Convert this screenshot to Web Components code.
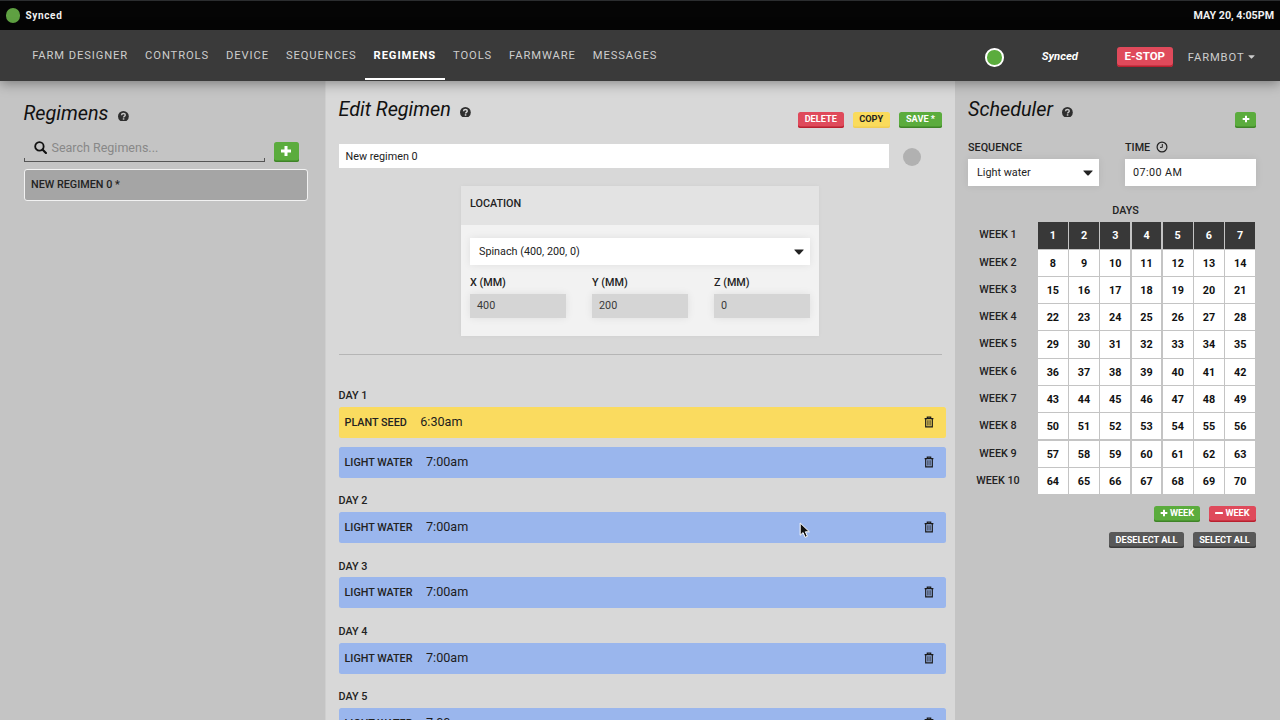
<!DOCTYPE html>
<html lang="en">
<head>
<meta charset="utf-8">
<title>FarmBot - Regimens</title>
<style>
    html, body {
        margin: 0;
        height: 100%;
        overflow: hidden;
        background: #d8d8d8;
        font-family: Roboto, "Liberation Sans", sans-serif;
        color: #222;
    }
</style>
</head>
<body>
<farm-app></farm-app>

<script>
const ICONS = {
    help: ['0 0 16 16', '<circle cx="8" cy="8" r="8" fill="#2e2e2e"/><path d="M5.2 6.300C5.300 4.500 6.500 3.700 8 3.700c1.600 0 2.800.9 2.800 2.300 0 2-2.500 1.900-2.500 3.500" fill="none" stroke="var(--hole, #c4c4c4)" stroke-width="2.100"/><rect x="7.100" y="10.700" width="2.300" height="2.200" fill="var(--hole, #c4c4c4)"/>'],
    search: ['0 0 12 12', '<circle cx="5" cy="5" r="3.900" fill="none" stroke="#111" stroke-width="1.700"/><path d="M7.800 7.800l3.200 3.200" stroke="#111" stroke-width="2" stroke-linecap="round"/>'],
    plus: ['0 0 12 12', '<path d="M4.500 1h3v3.500H11v3H7.500V11h-3V7.500H1v-3h3.500z" fill="currentColor"/>'],
    minus: ['0 0 12 12', '<rect x="0" y="4.500" width="12" height="3" rx=".6" fill="currentColor"/>'],
    clock: ['0 0 12 12', '<circle cx="6" cy="6" r="4.900" fill="none" stroke="#222" stroke-width="1.200"/><path d="M6.300 3v3.400H4" fill="none" stroke="#222" stroke-width="1"/>'],
    trash: ['0 0 10 12', '<path d="M3.300 2.300V1.200h3.400v1.100M.6 2.700h8.800M1.700 2.700v8.200h6.600V2.700" fill="none" stroke="#1a1a1a" stroke-width="1.200"/><path d="M3.700 4.200v5.400M5 4.200v5.400M6.300 4.200v5.400" stroke="#1a1a1a" stroke-width=".65"/>'],
    caret: ['0 0 10 6', '<path d="M.6.500h8.800q.5 0 .2.500L5.500 5.400q-.5.400-1 0L.4 1Q.1.500.6.500z" fill="currentColor"/>'],
    pointer: ['0 0 12 17', '<path d="M1.200 1v12.200l2.900-2.600 2 4.700 2.300-1-2-4.500h4z" fill="#111" stroke="#fff" stroke-width="1"/>']
};

class FbIcon extends HTMLElement {
    constructor() {
        super();
        this.attachShadow({ mode: 'open' });
    }

    connectedCallback() {
        const [box, shape] = ICONS[this.getAttribute('name')];
        this.shadowRoot.innerHTML = `
            <style>
                :host { display: inline-block; flex: none; width: 12px; height: 12px; }
                svg { display: block; width: 100%; height: 100%; }
            </style>
            <svg viewBox="${box}">${shape}</svg>
        `;
    }
}
customElements.define('fb-icon', FbIcon);

class FbButton extends HTMLElement {
    constructor() {
        super();
        this.attachShadow({ mode: 'open' });
        this.shadowRoot.innerHTML = `
            <style>
                :host {
                    --bg: #5bac3d;
                    --edge: #3f8328;
                    display: flex;
                    align-items: center;
                    justify-content: center;
                    box-sizing: border-box;
                    flex: none;
                    height: 16px;
                    padding-bottom: 2px;
                    border-radius: 2.500px;
                    background: var(--bg);
                    box-shadow: inset 0 -1.500px 0 var(--edge);
                    color: #fff;
                    font-size: 9.200px;
                    font-weight: 700;
                    white-space: nowrap;
                }
                :host([color=red]) { --bg: #df4a5b; --edge: #b8202f; }
                :host([color=yellow]) { --bg: #fadb5c; --edge: #f0cd55; color: #222; }
                :host([color=gray]) { --bg: #595959; --edge: #3c3c3c; }
                ::slotted(fb-icon) { width: 8px; height: 8px; margin-right: 2px; }
                :host([square]) ::slotted(fb-icon) { width: var(--glyph, 8px); height: var(--glyph, 8px); margin: 0; }
            </style>
            <slot></slot>
        `;
    }
}
customElements.define('fb-button', FbButton);

class FbTitle extends HTMLElement {
    constructor() {
        super();
        this.attachShadow({ mode: 'open' });
        this.shadowRoot.innerHTML = `
            <style>
                :host { display: flex; align-items: center; height: 24px; }
                h3 { margin: 0; font-size: 19.800px; font-weight: 400; font-style: italic; line-height: 25px; color: #111; white-space: nowrap; }
                fb-icon { width: 10.800px; height: 10.800px; margin: 5px 0 0 9.500px; }
            </style>
            <h3><slot></slot></h3><fb-icon name="help"></fb-icon>
        `;
    }
}
customElements.define('fb-title', FbTitle);

class FbField extends HTMLElement {
    constructor() {
        super();
        this.attachShadow({ mode: 'open' });
        this.shadowRoot.innerHTML = `
            <style>
                :host {
                    display: flex;
                    align-items: center;
                    justify-content: space-between;
                    box-sizing: border-box;
                    height: 27px;
                    padding: 0 6px 0 9px;
                    background: #fff;
                    box-shadow: 0 0 8px rgba(0, 0, 0, 0.08);
                    font-size: 10.800px;
                    white-space: nowrap;
                }
                :host([disabled]) { height: 24px; padding-left: 7px; background: #d5d5d5; color: #3a3a3a; }
                fb-icon { display: none; width: 10px; height: 6px; margin-top: 1px; }
                :host([select]) fb-icon { display: block; }
            </style>
            <span><slot></slot></span><fb-icon name="caret"></fb-icon>
        `;
    }
}
customElements.define('fb-field', FbField);

class TickerBar extends HTMLElement {
    constructor() {
        super();
        this.attachShadow({ mode: 'open' });
        this.shadowRoot.innerHTML = `
            <style>
                :host {
                    display: flex;
                    align-items: center;
                    box-sizing: border-box;
                    height: 30px;
                    padding: 0 6px 0 5.500px;
                    border-top: 1px solid #2b2d2f;
                    background: #050505;
                    color: #f0f0f0;
                    font-size: 10px;
                    font-weight: 700;
                }
                i { width: 14.500px; height: 14.500px; margin-right: 5.500px; border-radius: 50%; background: #5fa142; }
                .status { letter-spacing: 0.650px; margin-top: -1px; }
                .time { margin: -1px 0 0 auto; font-size: 10.700px; }
            </style>
            <i></i><span class="status">Synced</span><span class="time">MAY 20, 4:05PM</span>
        `;
    }
}
customElements.define('ticker-bar', TickerBar);

class NavBar extends HTMLElement {
    constructor() {
        super();
        this.attachShadow({ mode: 'open' });
    }

    connectedCallback() {
        const links = ['Farm Designer', 'Controls', 'Device', 'Sequences', 'Regimens', 'Tools', 'Farmware', 'Messages'];
        this.shadowRoot.innerHTML = `
            <style>
                :host {
                    position: relative;
                    z-index: 1;
                    display: flex;
                    align-items: center;
                    box-sizing: border-box;
                    height: 50.500px;
                    padding: 0 25px 0 24px;
                    background: #3a3a3a;
                    box-shadow: 0 2px 12px rgba(0, 0, 0, 0.4);
                    color: #cdcdcd;
                    font-size: 11.200px;
                    letter-spacing: 0.900px;
                    text-transform: uppercase;
                }
                nav { display: flex; align-self: stretch; }
                a { box-sizing: border-box; padding: 0 8.800px 0 8.200px; line-height: 52px; height: 50px; border-bottom: 2.500px solid transparent; white-space: nowrap; }
                a.active { border-color: #fff; color: #fff; font-weight: 700; }
                .dot { box-sizing: border-box; width: 18.500px; height: 18.500px; margin: 4px 0 0 auto; border: 2px solid #fff; border-radius: 50%; background: #5bac3d; }
                .sync { width: 39px; margin: 2px 36px 0 38px; font-size: 11.300px; font-weight: 700; font-style: italic; letter-spacing: 0; text-transform: none; color: #fff; }
                fb-button { width: 56px; height: 20px; margin: 3px 15px 0 0; font-size: 11.500px; letter-spacing: 0; border-radius: 3px; }
                .user { display: flex; align-items: center; margin-top: 4px; }
                .user fb-icon { width: 7px; height: 4px; margin-left: 3.500px; }
            </style>
            <nav>${links.map(l => `<a class="${l === 'Regimens' ? 'active' : ''}">${l}</a>`).join('')}</nav>
            <span class="dot"></span>
            <span class="sync">Synced</span>
            <fb-button color="red">E-STOP</fb-button>
            <span class="user">FarmBot<fb-icon name="caret"></fb-icon></span>
        `;
    }
}
customElements.define('nav-bar', NavBar);

class RegimenList extends HTMLElement {
    constructor() {
        super();
        this.attachShadow({ mode: 'open' });
        this.shadowRoot.innerHTML = `
            <style>
                :host { display: block; box-sizing: border-box; width: 325px; padding: 21px 17px 0 23.500px; background: #c4c4c4; }
                .row { display: flex; align-items: flex-end; justify-content: space-between; height: 36.500px; padding-right: 9.500px; }
                .search {
                    display: flex;
                    align-items: center;
                    box-sizing: border-box;
                    width: 241px;
                    height: 27px;
                    padding: 0 0 1px 9px;
                    font-size: 12.500px;
                    color: #888;
                    border: solid #555;
                    border-width: 0 1px 1px;
                    border-image: linear-gradient(transparent 87%, #555 87%) 1;
                }
                .search fb-icon { width: 13px; height: 13px; margin-right: 5px; }
                fb-button { width: 25px; height: 20px; --glyph: 12px; }
                .item {
                    box-sizing: border-box;
                    height: 32px;
                    margin-top: 7px;
                    padding-left: 6.500px;
                    border: 1.500px solid #f2f2f2;
                    border-radius: 3px;
                    background: #a5a5a5;
                    font-size: 10.800px;
                    font-weight: 500;
                    line-height: 30px;
                }
            </style>
            <fb-title>Regimens</fb-title>
            <div class="row">
                <div class="search"><fb-icon name="search"></fb-icon>Search Regimens...</div>
                <fb-button square><fb-icon name="plus"></fb-icon></fb-button>
            </div>
            <div class="item">NEW REGIMEN 0 *</div>
        `;
    }
}
customElements.define('regimen-list', RegimenList);

class LocationForm extends HTMLElement {
    constructor() {
        super();
        this.attachShadow({ mode: 'open' });
        this.shadowRoot.innerHTML = `
            <style>
                :host { display: block; width: 358px; height: 150px; background: #f2f2f2; font-size: 10.800px; box-shadow: 0 0 4px rgba(0, 0, 0, 0.04); }
                header { height: 38.500px; padding-left: 9px; line-height: 36px; font-weight: 500; background: #e3e3e3; }
                .body { padding: 13px 9px 0; }
                .axes { display: grid; grid-template-columns: repeat(3, 96px); justify-content: space-between; margin-top: 8px; }
                label { display: block; height: 21px; line-height: 20px; font-weight: 500; }
            </style>
            <header>LOCATION</header>
            <div class="body">
                <fb-field select>Spinach (400, 200, 0)</fb-field>
                <div class="axes">
                    <div><label>X (MM)</label><fb-field disabled>400</fb-field></div>
                    <div><label>Y (MM)</label><fb-field disabled>200</fb-field></div>
                    <div><label>Z (MM)</label><fb-field disabled>0</fb-field></div>
                </div>
            </div>
        `;
    }
}
customElements.define('location-form', LocationForm);

class RegimenItem extends HTMLElement {
    constructor() {
        super();
        this.attachShadow({ mode: 'open' });
    }

    connectedCallback() {
        this.shadowRoot.innerHTML = `
            <style>
                :host {
                    display: flex;
                    align-items: center;
                    box-sizing: border-box;
                    height: 31px;
                    padding: 0 12.500px 0 6px;
                    border-radius: 2.500px;
                    background: #9ab6ed;
                }
                :host([color=yellow]) { background: #fadb5f; }
                b { font-size: 10.800px; font-weight: 500; margin-right: 13.500px; }
                span { font-size: 12.600px; margin-top: -2px; color: #1c1c1c; }
                fb-icon { width: 10px; height: 12px; margin: -1px 0 0 auto; }
            </style>
            <b><slot></slot></b><span>${this.getAttribute('time')}</span><fb-icon name="trash"></fb-icon>
        `;
    }
}
customElements.define('regimen-item', RegimenItem);

class RegimenEditor extends HTMLElement {
    constructor() {
        super();
        this.attachShadow({ mode: 'open' });
    }

    connectedCallback() {
        const laterDays = [2, 3, 4, 5];
        this.shadowRoot.innerHTML = `
            <style>
                :host { display: block; box-sizing: border-box; width: 630px; padding: 17px 9px 0 13.500px; background: #d8d8d8; box-shadow: inset 1px 0 0 #cfcfcf; --hole: #d8d8d8; }
                .head { display: flex; align-items: flex-start; padding-right: 4px; }
                .buttons { display: flex; gap: 9px; margin: 14px 0 0 auto; }
                .name { display: flex; align-items: center; margin-top: 16.500px; }
                .name fb-field { width: 550.500px; height: 24px; padding-left: 7px; box-shadow: none; }
                .swatch { width: 18px; height: 18px; margin: 1px 0 -1px 13.500px; border-radius: 50%; background: #b1b1b1; }
                location-form { margin: 18px 0 0 122.500px; }
                hr { height: 1px; margin: 18px 4.500px 0 0; border: 0; background: #b5b5b5; }
                .days { padding-top: 30px; }
                h4 { height: 21.600px; margin: 0; font-size: 10.800px; font-weight: 500; line-height: 22px; }
                regimen-item { margin-bottom: 12.700px; }
                regimen-item[color] { margin-bottom: 9.200px; }
            </style>
            <div class="head">
                <fb-title>Edit Regimen</fb-title>
                <div class="buttons">
                    <fb-button color="red" style="width: 45.500px">DELETE</fb-button>
                    <fb-button color="yellow" style="width: 37.500px">COPY</fb-button>
                    <fb-button style="width: 43px">SAVE *</fb-button>
                </div>
            </div>
            <div class="name"><fb-field>New regimen 0</fb-field><span class="swatch"></span></div>
            <location-form></location-form>
            <hr>
            <div class="days">
                <h4>DAY 1</h4>
                <regimen-item color="yellow" time="6:30am">PLANT SEED</regimen-item>
                <regimen-item time="7:00am">LIGHT WATER</regimen-item>
                ${laterDays.map(d => `
                    <h4>DAY ${d}</h4>
                    <regimen-item time="7:00am">LIGHT WATER</regimen-item>
                `).join('')}
            </div>
        `;
    }
}
customElements.define('regimen-editor', RegimenEditor);

class WeekGrid extends HTMLElement {
    constructor() {
        super();
        this.attachShadow({ mode: 'open' });
    }

    connectedCallback() {
        const weeks = Array.from({ length: 10 }, (_, w) => w);
        const days = [1, 2, 3, 4, 5, 6, 7];
        this.shadowRoot.innerHTML = `
            <style>
                :host { display: block; font-size: 10.800px; font-weight: 500; }
                .caption { padding-left: 28px; height: 22.700px; line-height: 22px; text-align: center; }
                .week { display: flex; height: 27.270px; }
                .label { width: 60px; margin-right: 10px; line-height: 26px; text-align: center; }
                .days { flex: 1; display: grid; grid-template-columns: repeat(7, 1fr); gap: 1.500px; }
                .days span { height: 26.200px; line-height: 28.500px; text-align: center; background: #fff; color: #111; font-weight: 700; }
                .week.on span { background: #383838; color: #fff; }
            </style>
            <div class="caption">DAYS</div>
            ${weeks.map(w => `
                <div class="week ${w === 0 ? 'on' : ''}">
                    <div class="label">WEEK ${w + 1}</div>
                    <div class="days">${days.map(d => `<span>${w * 7 + d}</span>`).join('')}</div>
                </div>
            `).join('')}
        `;
    }
}
customElements.define('week-grid', WeekGrid);

class SchedulerPanel extends HTMLElement {
    constructor() {
        super();
        this.attachShadow({ mode: 'open' });
        this.shadowRoot.innerHTML = `
            <style>
                :host { display: block; box-sizing: border-box; width: 325px; padding: 17px 24px 0 13px; background: #c4c4c4; }
                .head { display: flex; justify-content: space-between; }
                .head fb-button { width: 21px; margin-top: 14px; }
                .inputs { display: grid; grid-template-columns: 131px 131px; justify-content: space-between; margin-top: 9px; }
                label { display: flex; align-items: center; height: 22.500px; font-size: 10.800px; font-weight: 500; }
                label fb-icon { margin: -1px 0 0 6px; }
                week-grid { margin: 13.700px 1px 0 0; }
                .time { padding-left: 8px; letter-spacing: 0.400px; }
                .buttons { display: flex; justify-content: flex-end; gap: 9px; margin: 10.500px 0 0; }
            </style>
            <div class="head"><fb-title>Scheduler</fb-title><fb-button square><fb-icon name="plus"></fb-icon></fb-button></div>
            <div class="inputs">
                <div><label>SEQUENCE</label><fb-field select>Light water</fb-field></div>
                <div><label>TIME <fb-icon name="clock"></fb-icon></label><fb-field class="time">07:00 AM</fb-field></div>
            </div>
            <week-grid></week-grid>
            <div class="buttons">
                <fb-button style="width: 46px"><fb-icon name="plus"></fb-icon>WEEK</fb-button>
                <fb-button color="red" style="width: 47px"><fb-icon name="minus"></fb-icon>WEEK</fb-button>
            </div>
            <div class="buttons">
                <fb-button color="gray" style="width: 75px">DESELECT ALL</fb-button>
                <fb-button color="gray" style="width: 63px">SELECT ALL</fb-button>
            </div>
        `;
    }
}
customElements.define('scheduler-panel', SchedulerPanel);

class FarmApp extends HTMLElement {
    constructor() {
        super();
        this.attachShadow({ mode: 'open' });
        this.shadowRoot.innerHTML = `
            <style>
                :host { display: flex; flex-direction: column; width: 1280px; height: 720px; overflow: hidden; }
                ticker-bar, nav-bar { flex: none; }
                main { display: flex; flex: 1; min-height: 0; }
                .cursor { position: absolute; left: 799px; top: 522px; width: 12px; height: 17px; }
            </style>
            <ticker-bar></ticker-bar>
            <nav-bar></nav-bar>
            <main>
                <regimen-list></regimen-list>
                <regimen-editor></regimen-editor>
                <scheduler-panel></scheduler-panel>
            </main>
            <fb-icon class="cursor" name="pointer"></fb-icon>
        `;
    }
}
customElements.define('farm-app', FarmApp);
</script>
</body>
</html>
